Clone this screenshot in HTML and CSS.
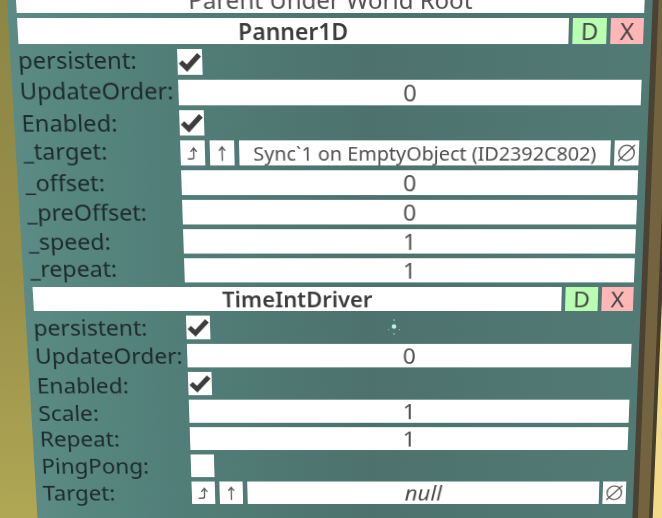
FILE: index.html
```html
<!DOCTYPE html>
<html lang="en">
<head>
  <meta charset="UTF-8" />
  <title>Inspector</title>
  <link rel="stylesheet" href="styles.css">
</head>
<body>
  <div class="board">
    <div class="rail-left"></div>
    <div class="panel">
      <div class="row parent"><div class="field">Parent Under World Root</div></div>

      <div class="row head">
        <div class="field title">Panner1D</div>
        <div class="btn green">D</div>
        <div class="btn red">X</div>
      </div>
      <div class="row"><div class="label hi">persistent:</div><div class="box"><svg viewBox="0 0 24 24"><path class="tick" d="M3 12l6 6L21 5"/></svg></div></div>
      <div class="row"><div class="label hi">UpdateOrder:</div><div class="field">0</div></div>
      <div class="row"><div class="label">Enabled:</div><div class="box"><svg viewBox="0 0 24 24"><path class="tick" d="M3 12l6 6L21 5"/></svg></div></div>
      <div class="row ref">
        <div class="label hi">_target:</div>
        <div class="box"><svg viewBox="0 0 24 24"><path class="thin" d="M7 18h4q2 0 2-2V8M10 11l3-4 3 4"/></svg></div>
        <div class="box"><svg viewBox="0 0 24 24"><path class="thin" d="M12 20V6M9 10l3-4 3 4"/></svg></div>
        <div class="field small">Sync`1 on EmptyObject (ID2392C802)</div>
        <div class="box clear"><svg viewBox="0 0 24 24"><circle class="thin" cx="12" cy="12" r="7.5"/><path class="thin" d="M4 20L20 4"/></svg></div>
      </div>
      <div class="row"><div class="label">_offset:</div><div class="field">0</div></div>
      <div class="row"><div class="label">_preOffset:</div><div class="field">0</div></div>
      <div class="row"><div class="label">_speed:</div><div class="field">1</div></div>
      <div class="row"><div class="label hi">_repeat:</div><div class="field">1</div></div>

      <div class="row head">
        <div class="field title">TimeIntDriver</div>
        <div class="btn green">D</div>
        <div class="btn red">X</div>
      </div>
      <div class="row">
        <div class="label">persistent:</div><div class="box"><svg viewBox="0 0 24 24"><path class="tick" d="M3 12l6 6L21 5"/></svg></div>
        <svg class="gizmo" viewBox="0 0 16 20"><circle cx="8" cy="10" r="2.4" fill="#b5f5f0"/><path d="M8 2v2M3 13l-1 1M13 13l1 1M7 18h2" stroke="#a9d8d4" fill="none"/></svg>
      </div>
      <div class="row"><div class="label">UpdateOrder:</div><div class="field">0</div></div>
      <div class="row"><div class="label lo">Enabled:</div><div class="box"><svg viewBox="0 0 24 24"><path class="tick" d="M3 12l6 6L21 5"/></svg></div></div>
      <div class="row"><div class="label lo">Scale:</div><div class="field">1</div></div>
      <div class="row"><div class="label">Repeat:</div><div class="field">1</div></div>
      <div class="row"><div class="label">PingPong:</div><div class="box"></div></div>
      <div class="row ref">
        <div class="label">Target:</div>
        <div class="box"><svg viewBox="0 0 24 24"><path class="thin" d="M7 18h4q2 0 2-2V8M10 11l3-4 3 4"/></svg></div>
        <div class="box"><svg viewBox="0 0 24 24"><path class="thin" d="M12 20V6M9 10l3-4 3 4"/></svg></div>
        <div class="field null">null</div>
        <div class="box clear"><svg viewBox="0 0 24 24"><circle class="thin" cx="12" cy="12" r="7.5"/><path class="thin" d="M4 20L20 4"/></svg></div>
      </div>
    </div>
    <div class="rail-right">
      <div class="rail-dark"></div>
      <div class="rail-wood"></div>
      <div class="rail-edge"></div>
      <div class="rail-pale"></div>
    </div>
  </div>
</body>
</html>
```
FILE: styles.css
```css
html, body {
  height: 518px;
  margin: 0;
  overflow: hidden;
}

body {
  font-family: "Noto Sans", sans-serif;
  background: #4f7571;
}

/* everything is laid out flat, the perspective of the screenshot comes from this one matrix */
.board {
  display: flex;
  width: 800px;
  height: 620px;
  margin: -32px 0 0 -53px;
  padding-top: 50px;
  box-sizing: border-box;
  background: linear-gradient(90deg, #5b8b84 60px, #527f79 200px, #4d726e 420px, #527a75 700px);
  transform-origin: 70px 50px;
  transform: matrix3d(1,0,0,0, 0.05794,1.00563,0,0.0001535, 0,0,1,0, 0,0,0,1);
}

.rail-left {
  width: 60.5px;
  margin: -50px 9.5px 0 0;
  flex-shrink: 0;
  background: linear-gradient(180deg, #8b8545, #98904a 50%, #b3a955);
}

.rail-right {
  display: flex;
  flex: 1;
  margin: -50px 0 0 8px;
}

.rail-dark {
  width: 6px;
  background: #4a4334;
}

.rail-wood {
  width: 12px;
  background: #73633f;
}

.rail-edge {
  width: 4px;
  background: #453d2e;
}

.rail-pale {
  flex: 1;
  background: #f3d98a;
}

.panel {
  width: 627px;
  flex-shrink: 0;
  display: flex;
  flex-direction: column;
  gap: 5px;
}

.row {
  position: relative;
  display: flex;
  flex-shrink: 0;
  gap: 4px;
  height: 26px;
  font-size: 24px;
  line-height: 26px;
}

.ref {
  gap: 5px;
}

.parent {
  margin-top: -31px;
}

.label {
  width: 156.5px;
  margin-left: -1.5px;
  flex-shrink: 0;
  color: #1d2b2a;
  white-space: nowrap;
}

.ref .label {
  width: 155.5px;
}

.hi {
  line-height: 22px;
}

.lo {
  line-height: 30px;
}

.field {
  flex: 1;
  background: #fff;
  color: #4f4f4f;
  text-align: center;
  white-space: nowrap;
}

.small {
  font-size: 20.2px;
}

.title {
  font-size: 23px;
  font-weight: 600;
  color: #3c3c3c;
}

.null {
  font-style: italic;
}

.btn {
  width: 33px;
  color: #454545;
  text-align: center;
}

.head .green {
  width: 34px;
}

.green {
  background: #b8fdb0;
}

.red {
  background: #ffb6b6;
}

.box {
  width: 25px;
  flex-shrink: 0;
  background: #fff;
}

.clear {
  margin-left: -1px;
}

.box svg {
  display: block;
  width: 100%;
  height: 100%;
}

.tick {
  fill: none;
  stroke: #3d3d3d;
  stroke-width: 5;
}

.thin {
  fill: none;
  stroke: #555;
  stroke-width: 1.3;
}

.gizmo {
  position: absolute;
  left: 369px;
  top: 2px;
  width: 16px;
  height: 20px;
}
```
